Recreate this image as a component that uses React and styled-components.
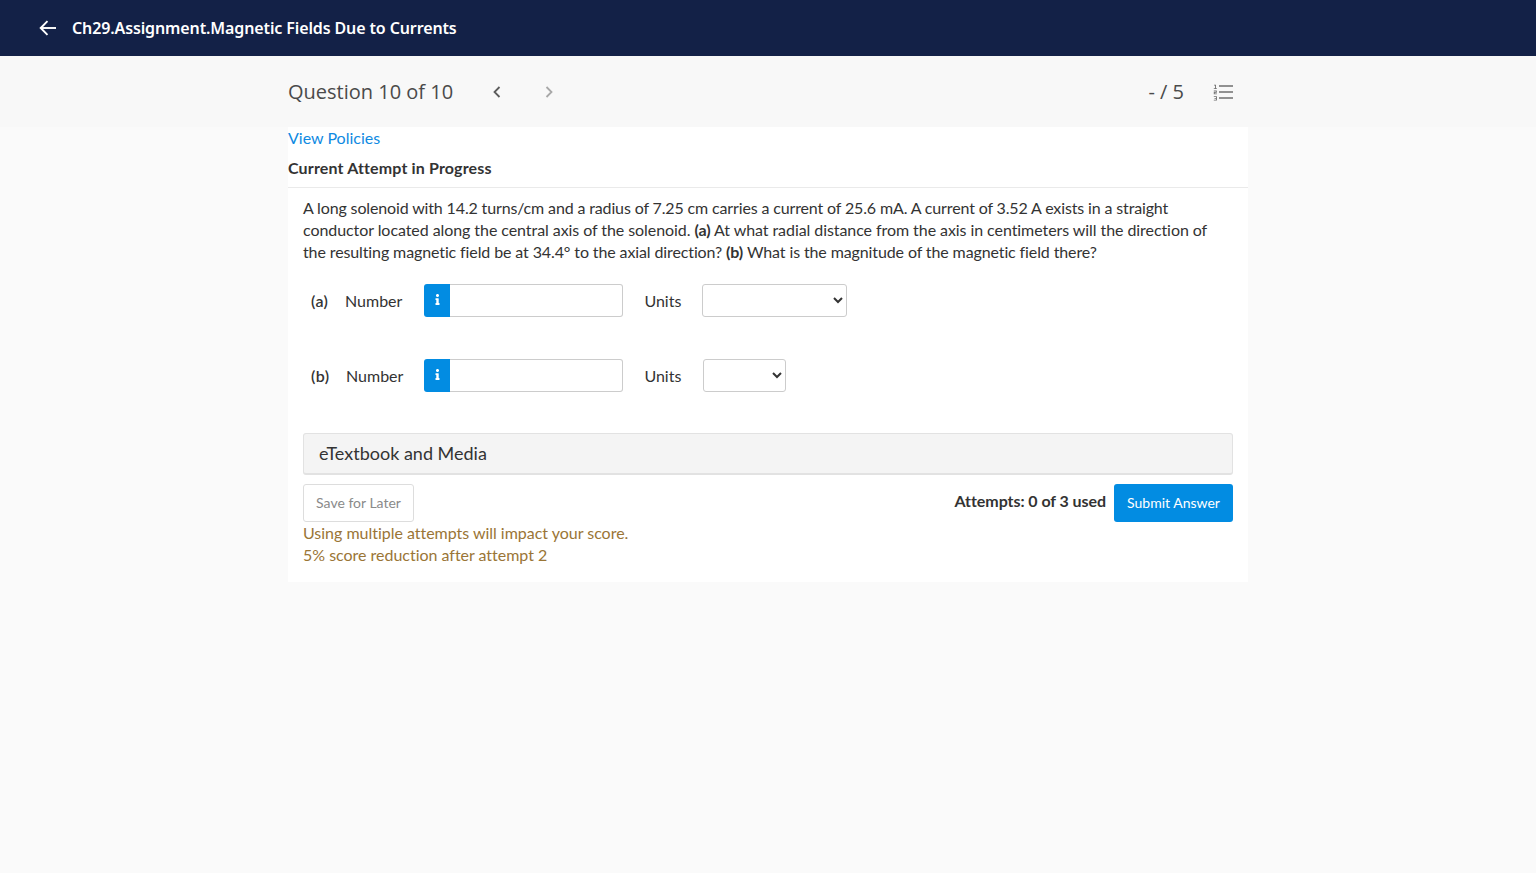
import React from 'react';
import styled, { createGlobalStyle } from 'styled-components';
import { FaInfo } from 'react-icons/fa';

const GlobalStyle = createGlobalStyle`
    html, body {
        margin: 0;
        padding: 0;
        min-height: 100%;
        background-color: #fafafa;
        font-family: "Lato", "Liberation Sans", sans-serif;
        color: #333;
    }
    * {
        box-sizing: border-box;
    }
`;

const parts = [
    { label: '(a)', selectWidth: 145, labelGap: 15, inputGap: 22, selectGap: 21 },
    { label: '(b)', selectWidth: 83, labelGap: 16, inputGap: 21, selectGap: 22 },
];

const App = () => {
    return (
        <Page>
            <GlobalStyle />
            <TopBar>
                <BackButton aria-label="Back">
                    <svg width="18" height="16" viewBox="0 0 18 16" fill="none" stroke="#fff" strokeWidth="1.9">
                        <path d="M17 8H2" />
                        <path d="M8.5 1.2 1.7 8l6.8 6.8" />
                    </svg>
                </BackButton>
                <AssignmentTitle>Ch29.Assignment.Magnetic Fields Due to Currents</AssignmentTitle>
            </TopBar>
            <QuestionBar>
                <QuestionBarInner>
                    <QuestionNav>
                        <QuestionCount>Question 10 of 10</QuestionCount>
                        <NavButton aria-label="Previous">
                            <Chevron viewBox="0 0 8 12"><path d="M6.5 1 1.5 6l5 5" /></Chevron>
                        </NavButton>
                        <NavButton $disabled aria-label="Next">
                            <Chevron viewBox="0 0 8 12"><path d="M1.5 1l5 5-5 5" /></Chevron>
                        </NavButton>
                    </QuestionNav>
                    <ScoreArea>
                        <Score>- / 5</Score>
                        <ListIcon width="20" height="17" viewBox="0 0 20 17">
                            <path d="M6 2h14M6 8h14M6 14h14" stroke="#6f6f6f" strokeWidth="1.7" fill="none" />
                            <path d="M1 .8h2v3.4H3.9v.8H.8v-.8h1.3V1.6H1zM.8 6.6h3v2.2H1.7v.8h2.2v.7H.8V8.1h2.2v-.7H.8zM.8 12.3h3.1v4.2H.8v-.7H3v-1h-1.5v-.7H3v-1.1H.8z" fill="#6f6f6f" />
                        </ListIcon>
                    </ScoreArea>
                </QuestionBarInner>
            </QuestionBar>
            <Card>
                <PolicyLink href="#">View Policies</PolicyLink>
                <AttemptHeading>Current Attempt in Progress</AttemptHeading>
                <Content>
                    <QuestionText>
                        <TextLine $spacing={-0.14}>A long solenoid with 14.2 turns/cm and a radius of 7.25 cm carries a current of 25.6 mA. A current of 3.52 A exists in a straight</TextLine>
                        <TextLine $spacing={-0.07}>conductor located along the central axis of the solenoid. <b>(a)</b> At what radial distance from the axis in centimeters will the direction of</TextLine>
                        <TextLine $spacing={-0.115}>the resulting magnetic field be at 34.4° to the axial direction? <b>(b)</b> What is the magnitude of the magnetic field there?</TextLine>
                    </QuestionText>
                    {parts.map((part) => (
                        <AnswerRow key={part.label}>
                            <PartLabel>{part.label}</PartLabel>
                            <FieldLabel $gap={part.labelGap}>Number</FieldLabel>
                            <InfoButton $gap={part.inputGap} aria-label="Info"><FaInfo /></InfoButton>
                            <NumberInput />
                            <FieldLabel $gap={21}>Units</FieldLabel>
                            <UnitSelect $width={part.selectWidth} $gap={part.selectGap}>
                                <option></option>
                            </UnitSelect>
                        </AnswerRow>
                    ))}
                    <MediaPanel>eTextbook and Media</MediaPanel>
                    <ActionRow>
                        <SaveButton>Save for Later</SaveButton>
                        <SubmitArea>
                            <AttemptsText>Attempts: 0 of 3 used</AttemptsText>
                            <SubmitButton>Submit Answer</SubmitButton>
                        </SubmitArea>
                    </ActionRow>
                    <Notice>
                        Using multiple attempts will impact your score.
                        <br />
                        5% score reduction after attempt 2
                    </Notice>
                </Content>
            </Card>
        </Page>
    );
};

export default App;

const Page = styled.div`
    min-height: 873px;
    background-color: #fafafa;
`;

const TopBar = styled.header`
    height: 56px;
    background-color: #132147;
    display: flex;
    align-items: center;
    padding-left: 39px;
`;

const BackButton = styled.button`
    display: flex;
    padding: 0;
    border: none;
    background: transparent;
    margin-right: 15px;
    cursor: pointer;
`;

const AssignmentTitle = styled.h1`
    margin: 0;
    font-family: "Noto Sans", sans-serif;
    font-size: 16px;
    font-weight: 600;
    letter-spacing: -0.12px;
    color: #fff;
`;

const QuestionBar = styled.div`
    height: 71px;
    background-color: #f8f8f8;
`;

const QuestionBarInner = styled.div`
    width: 960px;
    height: 100%;
    margin: 0 auto;
    display: flex;
    align-items: center;
    justify-content: space-between;
`;

const QuestionNav = styled.div`
    display: flex;
    align-items: center;
`;

const QuestionCount = styled.span`
    font-family: "Open Sans", sans-serif;
    font-size: 20px;
    color: #4a4a4a;
    width: 205px;
`;

const NavButton = styled.button`
    display: flex;
    width: 52px;
    padding: 0;
    border: none;
    background: transparent;
    cursor: pointer;
    color: ${props => props.$disabled ? '#a8a8a8' : '#5c5c5c'};
`;

const Chevron = styled.svg`
    width: 8px;
    height: 12px;
    fill: none;
    stroke: currentColor;
    stroke-width: 1.8;
`;

const ScoreArea = styled.div`
    display: flex;
    align-items: center;
    padding-right: 15px;
`;

const Score = styled.span`
    font-family: "Open Sans", sans-serif;
    font-size: 20px;
    color: #4a4a4a;
    margin-right: 29px;
`;

const ListIcon = styled.svg`
    display: block;
    margin-top: 1px;
`;

const Card = styled.main`
    width: 960px;
    height: 455px;
    margin: 0 auto;
    background-color: #fff;
`;

const PolicyLink = styled.a`
    display: block;
    height: 24px;
    font-size: 16px;
    line-height: 21px;
    color: #0f8ae2;
    text-decoration: none;
`;

const AttemptHeading = styled.div`
    height: 37px;
    padding-top: 5px;
    font-size: 16px;
    line-height: 24px;
    font-weight: 700;
    letter-spacing: 0.15px;
    color: #333;
    border-bottom: 1px solid #eaeaea;
`;

const Content = styled.div`
    padding: 9px 15px 0;
`;

const QuestionText = styled.div`
    margin: 0 0 21px;
    font-size: 16px;
    color: #333;
`;

const TextLine = styled.div`
    height: 22px;
    line-height: 22px;
    white-space: nowrap;
    letter-spacing: ${props => props.$spacing}px;
`;

const AnswerRow = styled.div`
    display: flex;
    align-items: center;
    height: 33px;
    padding-left: 8px;
    margin-bottom: 42px;
`;

const PartLabel = styled.span`
    font-size: 16px;
    font-weight: 600;
    letter-spacing: 0.4px;
    color: #333;
    width: 19px;
`;

const FieldLabel = styled.label`
    margin-left: ${props => props.$gap}px;
    font-size: 16px;
    color: #333;
`;

const InfoButton = styled.button`
    width: 26px;
    height: 33px;
    margin-left: ${props => props.$gap}px;
    display: flex;
    align-items: center;
    justify-content: center;
    padding: 0 0 2px;
    border: none;
    border-radius: 3px 0 0 3px;
    background-color: #028ce2;
    color: #fff;
    font-size: 11px;
`;

const NumberInput = styled.input`
    width: 173px;
    height: 33px;
    margin-right: 0;
    border: 1px solid #ccc;
    border-left: none;
    border-radius: 0 3px 3px 0;
    background: #fff;
    outline: none;
    font-size: 16px;
`;

const UnitSelect = styled.select`
    width: ${props => props.$width}px;
    height: 33px;
    margin-left: ${props => props.$gap}px;
    border: 1px solid #ccc;
    border-radius: 3px;
    background: #fff;
    font-size: 16px;
    font-family: inherit;
    color: #333;
`;

const MediaPanel = styled.div`
    height: 42px;
    margin-top: -1px;
    padding: 0 0 2px 15px;
    display: flex;
    align-items: center;
    background-color: #f4f4f4;
    border: 1px solid #e2e2e2;
    border-bottom: 2px solid #e2e2e2;
    border-radius: 3px;
    font-size: 18px;
    color: #333;
`;

const ActionRow = styled.div`
    display: flex;
    justify-content: space-between;
    margin-top: 9px;
`;

const SaveButton = styled.button`
    width: 111px;
    height: 38px;
    padding: 0 0 2px;
    border: 1px solid #ddd;
    border-radius: 3px;
    background: #fff;
    font-family: inherit;
    font-size: 14px;
    color: #8a8a8a;
`;

const SubmitArea = styled.div`
    display: flex;
    align-items: flex-start;
    gap: 8px;
`;

const AttemptsText = styled.span`
    font-size: 16px;
    line-height: 34px;
    font-weight: 700;
    letter-spacing: -0.06px;
    color: #333;
`;

const SubmitButton = styled.button`
    width: 119px;
    height: 38px;
    padding: 0 0 2px;
    border: none;
    border-radius: 3px;
    background-color: #028ce2;
    font-family: inherit;
    font-size: 14px;
    color: #fff;
`;

const Notice = styled.div`
    font-size: 16px;
    line-height: 22px;
    letter-spacing: -0.02px;
    color: #9a7536;
`;
